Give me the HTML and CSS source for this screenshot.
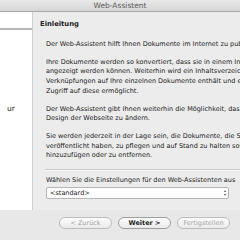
FILE: index.html
```html
<!DOCTYPE html>
<html lang="de">
<head>
    <meta charset="UTF-8">
    <title>Web-Assistent</title>
    <link rel="stylesheet" href="styles.css">
</head>
<body>
    <div class="fenster">
        <div class="titelleiste">Web-Assistent</div>
        <div class="hauptbereich">
            <div class="seitenleiste">
                <div class="liste-kopf"></div>
                <div class="liste-eintrag">ur</div>
            </div>
            <div class="inhalt">
                <h2>Einleitung</h2>
                <div class="texte">
                    <p>Der Web-Assistent hilft Ihnen Dokumente im Internet zu publizieren.</p>
                    <p>Ihre Dokumente werden so konvertiert, dass sie in einem Internet-Browser<br>angezeigt werden können. Weiterhin wird ein Inhaltsverzeichnis erstellt, das<br>Verknüpfungen auf Ihre einzelnen Dokumente enthält und einen schnellen<br>Zugriff auf diese ermöglicht.</p>
                    <p>Der Web-Assistent gibt Ihnen weiterhin die Möglichkeit, das Layout und<br>Design der Webseite zu ändern.</p>
                    <p>Sie werden jederzeit in der Lage sein, die Dokumente, die Sie<br>veröffentlicht haben, zu pflegen und auf Stand zu halten sowie neue<br>hinzuzufügen oder zu entfernen.</p>
                </div>
                <div class="trenner"></div>
                <div class="auswahl">
                    <label>Wählen Sie die Einstellungen für den Web-Assistenten aus</label>
                    <div class="feld">
                        <span>&lt;standard&gt;</span>
                        <span class="pfeile">▴<br>▾</span>
                    </div>
                </div>
            </div>
        </div>
        <div class="fusszeile">
            <button class="knopf inaktiv">&lt; Zurück</button>
            <button class="knopf haupt">Weiter &gt;</button>
            <button class="knopf inaktiv">Fertigstellen</button>
        </div>
    </div>
</body>
</html>
```

FILE: styles.css
```css
body {
    margin: 0;
    font-family: "DejaVu Sans", sans-serif;
    font-size: 6.5px;
    color: #222;
    background-color: #e8e8e8;
    overflow: hidden;
}
.fenster {
    width: 240px;
    height: 240px;
    display: flex;
    flex-direction: column;
}
.titelleiste {
    height: 11px;
    line-height: 11px;
    text-align: center;
    font-size: 7.5px;
    color: #5a5a5a;
    background: linear-gradient(#e9e9e9, #d6d6d6);
    border-bottom: 1px solid #a8a8a8;
}
.hauptbereich {
    display: flex;
    height: 198px;
}
.seitenleiste {
    width: 32px;
    background-color: #fff;
    border-right: 1px solid #d0d0d0;
}
.liste-kopf {
    height: 16px;
    border-bottom: 2px solid #b8b8b8;
}
.liste-eintrag {
    margin-top: 74px;
    padding-left: 7px;
    font-size: 7.5px;
}
.inhalt {
    flex: 1;
    background-color: #ececec;
    padding: 8px 0 0 7px;
    white-space: nowrap;
    overflow: hidden;
}
h2 {
    margin: 0 0 12px 0;
    height: 8px;
    line-height: 8px;
    font-size: 6.8px;
    font-weight: bold;
}
.texte {
    padding-left: 6px;
}
p {
    margin: 0 0 8px 0;
    line-height: 9.7px;
}
.trenner {
    margin: 6px 0 0 5px;
    border-top: 1px solid #c8c8c8;
    border-bottom: 1px solid #fafafa;
}
.auswahl {
    padding: 5px 0 0 6px;
}
.auswahl label {
    display: block;
    height: 8px;
    line-height: 8px;
}
.feld {
    display: flex;
    justify-content: space-between;
    align-items: center;
    width: 176px;
    height: 10px;
    margin-top: 3px;
    padding: 0 2px 0 3px;
    background-color: #fff;
    border: 1px solid #b5b5b5;
    border-radius: 2px;
}
.pfeile {
    font-size: 4px;
    line-height: 4px;
    color: #555;
}
.fusszeile {
    flex: 1;
    display: flex;
    gap: 6px;
    padding: 7px 0 0 59px;
    background-color: #e8e8e8;
}
.knopf {
    width: 53px;
    height: 12px;
    padding: 0;
    font-family: "DejaVu Sans", sans-serif;
    font-size: 6.5px;
    border: 1px solid #9e9e9e;
    border-radius: 7px;
    background: linear-gradient(#fdfdfd, #eaeaea);
}
.inaktiv {
    color: #a4a4a4;
    border-color: #bcbcbc;
}
.haupt {
    color: #222;
    font-weight: bold;
}
```
